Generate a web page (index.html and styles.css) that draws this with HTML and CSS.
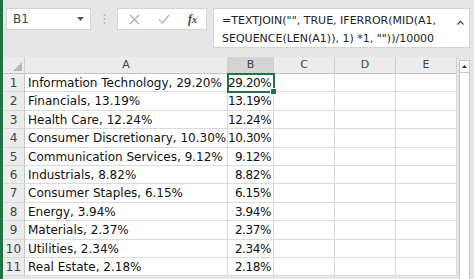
FILE: index.html
```html
<!DOCTYPE html>
<html lang="en">
<head>
	<meta charset="UTF-8">
	<title>Sheet</title>
	<link rel="stylesheet" href="styles.css">
</head>
<body>
	<div class="app">
		<div class="edge"></div>
		<div class="main">
			<div class="toolbar">
				<div class="namebox">
					<span>B1</span>
					<svg class="drop" width="7" height="4" viewBox="0 0 7 4"><path d="M0 0h7L3.5 4z" fill="#555"/></svg>
				</div>
				<div class="grip">
					<svg width="3" height="12" viewBox="0 0 3 12"><circle cx="1.5" cy="2" r="1" fill="#b8b8b8"/><circle cx="1.5" cy="6" r="1" fill="#b8b8b8"/><circle cx="1.5" cy="10" r="1" fill="#b8b8b8"/></svg>
				</div>
				<div class="btnbox">
					<svg class="ico" width="11" height="11" viewBox="0 0 11 11"><path d="M1 1l9 9M10 1l-9 9" stroke="#b0b0b0" stroke-width="1.3"/></svg>
					<svg class="ico" width="12" height="10" viewBox="0 0 12 10"><path d="M1 5.5l3.5 3.5L11 1" stroke="#b8b8b8" stroke-width="1.4" fill="none"/></svg>
					<span class="fx">f<span>x</span></span>
				</div>
				<div class="formula">
					<div class="ftext">=TEXTJOIN("", TRUE, IFERROR(MID(A1,<br>SEQUENCE(LEN(A1)), 1) *1, ""))/10000</div>
					<svg class="caret" width="7" height="5" viewBox="0 0 7 5"><path d="M0.5 4.5L3.5 1.2 6.5 4.5" stroke="#555" stroke-width="1.3" fill="none"/></svg>
				</div>
			</div>
			<div class="sheetwrap">
				<div class="sheet">
					<div class="hd corner"><svg width="9" height="9" viewBox="0 0 9 9"><path d="M9 0v9H0z" fill="#b8b8b8"/></svg></div>
					<div class="hd">A</div>
					<div class="hd sel">B</div>
					<div class="hd">C</div>
					<div class="hd">D</div>
					<div class="hd">E</div>

					<div class="rh">1</div><div class="c">Information Technology, 29.20%</div><div class="c n active">29.20%</div><div class="c"></div><div class="c"></div><div class="c"></div>
					<div class="rh">2</div><div class="c">Financials, 13.19%</div><div class="c n">13.19%</div><div class="c"></div><div class="c"></div><div class="c"></div>
					<div class="rh">3</div><div class="c">Health Care, 12.24%</div><div class="c n">12.24%</div><div class="c"></div><div class="c"></div><div class="c"></div>
					<div class="rh">4</div><div class="c">Consumer Discretionary, 10.30%</div><div class="c n">10.30%</div><div class="c"></div><div class="c"></div><div class="c"></div>
					<div class="rh">5</div><div class="c">Communication Services, 9.12%</div><div class="c n">9.12%</div><div class="c"></div><div class="c"></div><div class="c"></div>
					<div class="rh">6</div><div class="c">Industrials, 8.82%</div><div class="c n">8.82%</div><div class="c"></div><div class="c"></div><div class="c"></div>
					<div class="rh">7</div><div class="c">Consumer Staples, 6.15%</div><div class="c n">6.15%</div><div class="c"></div><div class="c"></div><div class="c"></div>
					<div class="rh">8</div><div class="c">Energy, 3.94%</div><div class="c n">3.94%</div><div class="c"></div><div class="c"></div><div class="c"></div>
					<div class="rh">9</div><div class="c">Materials, 2.37%</div><div class="c n">2.37%</div><div class="c"></div><div class="c"></div><div class="c"></div>
					<div class="rh">10</div><div class="c">Utilities, 2.34%</div><div class="c n">2.34%</div><div class="c"></div><div class="c"></div><div class="c"></div>
					<div class="rh">11</div><div class="c">Real Estate, 2.18%</div><div class="c n">2.18%</div><div class="c"></div><div class="c"></div><div class="c"></div>
				</div>
				<div class="vscroll">
					<div class="up"><svg width="5" height="3" viewBox="0 0 5 3"><path d="M0 3L2.5 0 5 3z" fill="#333"/></svg></div>
				</div>
			</div>
		</div>
	</div>
</body>
</html>
```

FILE: styles.css
```css
*{
	margin: 0;
	padding: 0;
	box-sizing: border-box;
}
body{
	width: 474px;
	height: 279px;
	overflow: hidden;
	background: #e6e6e6;
	font-family: "DejaVu Sans", sans-serif;
	color: #222;
}
.app{
	display: flex;
	height: 279px;
}
.edge{
	width: 3px;
	background: #217346;
}
.main{
	flex: 1;
}
.toolbar{
	display: flex;
	align-items: flex-start;
	height: 57px;
	padding-top: 8px;
}
.namebox{
	width: 85px;
	height: 22px;
	margin-left: 3px;
	background: #fff;
	border: 1px solid #d4d4d4;
	display: flex;
	align-items: center;
	justify-content: space-between;
	padding: 0 6px 0 6px;
	font-size: 12px;
	color: #444;
}
.grip{
	width: 26px;
	height: 22px;
	display: flex;
	align-items: center;
	justify-content: center;
}
.btnbox{
	width: 90px;
	height: 22px;
	background: #fff;
	border: 1px solid #d4d4d4;
	display: flex;
	align-items: center;
	justify-content: space-between;
	padding: 0 9px 0 11px;
}
.fx{
	font-family: "Liberation Serif", serif;
	font-style: italic;
	font-size: 12px;
	color: #444;
	font-weight: bold;
}
.fx span{
	font-size: 10px;
}
.formula{
	width: 257px;
	height: 40px;
	margin-left: 6px;
	background: #fff;
	border: 1px solid #d4d4d4;
	display: flex;
	justify-content: space-between;
	padding: 3px 5px 0 8px;
}
.ftext{
	font-size: 11px;
	line-height: 18px;
	color: #222;
	white-space: nowrap;
}
.caret{
	margin-top: 8px;
}
.sheetwrap{
	display: flex;
	align-items: flex-start;
}
.sheet{
	display: grid;
	grid-template-columns: 22px 203px 46px 61px 61px 61px;
	grid-template-rows: 17px repeat(11, 18.4px);
	background: #fff;
}
.hd{
	background: #ececec;
	border-right: 1px solid #d0d0d0;
	border-bottom: 1px solid #c6c6c6;
	font-size: 11px;
	color: #444;
	text-align: center;
	line-height: 16px;
}
.hd.sel{
	background: #d4d4d4;
}
.corner{
	display: flex;
	align-items: flex-end;
	justify-content: flex-end;
	padding: 0 2px 2px 0;
}
.rh{
	background: #ececec;
	border-right: 1px solid #c6c6c6;
	border-bottom: 1px solid #d8d8d8;
	font-size: 12px;
	color: #444;
	text-align: center;
	line-height: 18px;
}
.c{
	border-right: 1px solid #dadada;
	border-bottom: 1px solid #dadada;
	font-size: 12px;
	line-height: 18px;
	padding-left: 3px;
	white-space: nowrap;
	color: #111;
}
.c.n{
	text-align: right;
	padding: 0 2px 0 0;
	letter-spacing: -0.4px;
}
.active{
	position: relative;
	outline: 2px solid #217346;
	outline-offset: -1px;
}
.active::after{
	content: "";
	position: absolute;
	right: -4px;
	bottom: -4px;
	width: 5px;
	height: 5px;
	background: #217346;
	border: 1px solid #fff;
}
.vscroll{
	width: 11px;
	height: 222px;
	margin-left: 2px;
	margin-top: 3px;
	background: #fff;
	border: 1px solid #c6c6c6;
}
.up{
	height: 12px;
	border-bottom: 1px solid #c6c6c6;
	display: flex;
	align-items: center;
	justify-content: center;
}
```
